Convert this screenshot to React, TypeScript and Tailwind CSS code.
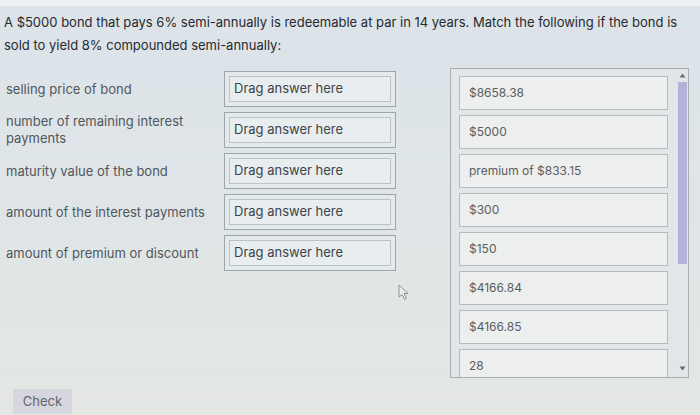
import React from 'react';

const rows: string[] = [
  'selling price of bond',
  'number of remaining interest payments',
  'maturity value of the bond',
  'amount of the interest payments',
  'amount of premium or discount',
];

const answers: string[] = [
  '$8658.38',
  '$5000',
  'premium of $833.15',
  '$300',
  '$150',
  '$4166.84',
  '$4166.85',
  '28',
];

function DropBox() {
  return (
    <div className="h-[36px] w-[172px] border border-[#9da6ab] bg-[#e3e9ec] p-[4px]">
      <div className="flex h-full items-center border border-[#bcc3c7] bg-[#e8edef] px-[4px] text-[13px] text-[#3f4448]">
        Drag answer here
      </div>
    </div>
  );
}

export default function App() {
  return (
    <div
      className="relative h-[415px] w-[700px] overflow-hidden bg-gradient-to-b from-[#dce3e9] via-[#dfe5e7] to-[#e4e7e3]"
      style={{ fontFamily: 'Inter, "Noto Sans", sans-serif' }}
    >
      {/* top strip of the photo */}
      <div className="h-[6px] bg-[#eef0f2]" />

      {/* Question */}
      <p className="px-[4px] pt-[5px] text-[13px] leading-[23px] text-[#262a2e]">
        A $5000 bond that pays 6% semi-annually is redeemable at par in 14 years. Match the following if the bond is
        <br />
        sold to yield 8% compounded semi-annually:
      </p>

      <div className="flex pt-[11px]">
        {/* Left: labels and drop targets */}
        <div className="flex w-[450px] flex-col gap-[5px] pt-[3px] pl-[6px]">
          {rows.map((label) => (
            <div key={label} className="flex h-[36px] items-center">
              <div className="w-[218px] pr-[4px] text-[13px] leading-[17px] text-[#51575b]">{label}</div>
              <DropBox />
            </div>
          ))}
        </div>

        {/* Right: answer bank */}
        <div className="flex h-[310px] w-[239px] border border-[#a7adb0] bg-[#e2e6e8]">
          <div className="flex flex-1 flex-col gap-[5px] overflow-hidden pt-[7px] pl-[8px] pr-[9px]">
            {answers.map((a) => (
              <div
                key={a}
                className="flex h-[34px] shrink-0 items-center border border-[#b6bbbe] bg-[#edeeee] px-[9px] text-[12px] text-[#595e62]"
              >
                {a}
              </div>
            ))}
          </div>
          {/* scrollbar */}
          <div className="flex w-[11px] flex-col items-center pt-[4px] pb-[6px]">
            <svg width="7" height="5" viewBox="0 0 7 5">
              <path d="M0.5 4.5 L3.5 0.5 L6.5 4.5 Z" fill="#6b6f73" />
            </svg>
            <div className="mt-[4px] h-[182px] w-[9px] bg-[#b3b2d8]" />
            <div className="flex-1" />
            <svg width="7" height="5" viewBox="0 0 7 5">
              <path d="M0.5 0.5 L3.5 4.5 L6.5 0.5 Z" fill="#6b6f73" />
            </svg>
          </div>
        </div>
      </div>

      {/* Check button */}
      <div className="mt-[11px] ml-[13px] flex h-[25px] w-[59px] items-center justify-center bg-[#d6d7de] text-[13px] text-[#62666b]">
        Check
      </div>

      {/* mouse cursor */}
      <svg className="absolute left-[398px] top-[284px]" width="12" height="17" viewBox="0 0 12 17">
        <path
          d="M1 1 L1 13 L4 10.5 L6.5 15.5 L8.5 14.5 L6 9.5 L10 9.5 Z"
          fill="#eef0f0"
          stroke="#8b9094"
          strokeWidth="1"
          strokeLinejoin="round"
        />
      </svg>
    </div>
  );
}
